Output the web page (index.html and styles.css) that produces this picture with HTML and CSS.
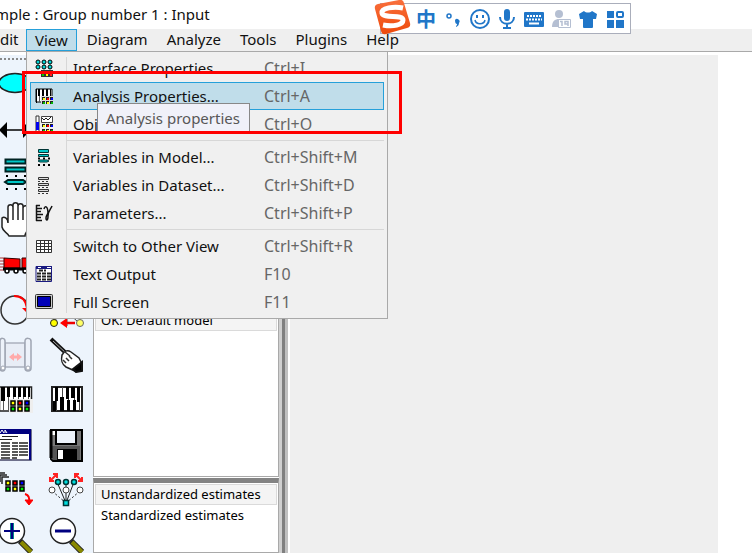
FILE: index.html
```html
<!DOCTYPE html>
<html lang="en">
<head>
  <meta charset="UTF-8">
  <title>Group number 1 : Input</title>
  <link rel="stylesheet" href="styles.css">
</head>
<body>

  <header class="titlebar">mple : Group number 1 : Input</header>

  <nav class="menubar">
    <button class="edit">dit</button>
    <div class="dropdown">
      <button class="open">View</button>
      <div class="menu">
        <button class="item">
          <svg viewBox="0 0 18 18">
            <g fill="#00d5d5" stroke="#000"><circle cx="3" cy="3" r="2"/><circle cx="9" cy="3" r="2"/><circle cx="15" cy="3" r="2"/><circle cx="3" cy="8" r="2"/><circle cx="9" cy="8" r="2"/><circle cx="15" cy="8" r="2"/></g>
            <path d="M6 11h12v7H6z" fill="#333"/>
            <path d="M7 12h2v2H7zM11 15h2v2h-2z" fill="#ff0"/><path d="M11 12h2v2h-2zM15 15h2v2h-2z" fill="#f22"/><path d="M15 12h2v2h-2z" fill="#22f"/><path d="M7 15h2v2H7z" fill="#0c0"/>
          </svg>
          <span>Interface Properties...</span><kbd>Ctrl+I</kbd>
        </button>
        <button class="item active">
          <svg viewBox="0 0 18 18">
            <path d="M1 2h16v13H1z" fill="#fff" stroke="#000"/>
            <path d="M4.500 2v13M8.500 2v7M12.500 2v7" stroke="#555"/>
            <path d="M3 2h2v7H3zM7 2h2v7H7zM11 2h2v7h-2zM15 2h1v7h-1zM1 2h1v14H1z"/>
            <path d="M6 9h12v8H6z" fill="#ddd"/>
            <path d="M7 10h3v3H7zM11 10h3v3h-3zM15 10h3v3h-3zM7 14h3v3H7zM11 14h3v3h-3zM15 14h3v3h-3z" fill="#222"/>
            <path d="M8 11h2v2H8zM12 15h2v2h-2z" fill="#ff0"/><path d="M12 11h2v2h-2z" fill="#f00"/><path d="M16 11h2v2h-2z" fill="#00f"/><path d="M8 15h2v2H8zM16 15h2v2h-2z" fill="#0b0"/>
          </svg>
          <span>Analysis Properties...</span><kbd>Ctrl+A</kbd>
        </button>
        <button class="item">
          <svg viewBox="0 0 18 18">
            <path d="M1 1h3v16H1z" fill="#fff" stroke="#333"/><path d="M1 7h3v8H1z" fill="#00e"/>
            <path d="M6.500 1.500h11v6h-11z" fill="#fff" stroke="#444"/><path d="M7 3l2 2 2-2 2 2 3-3" fill="none" stroke="#222"/>
            <path d="M7 9h3v3H7zM11 9h3v3h-3zM15 9h3v3h-3zM7 14h3v3H7zM11 14h3v3h-3zM15 14h3v3h-3z" fill="#222"/>
            <path d="M8 10h2v2H8zM12 15h2v2h-2z" fill="#ff0"/><path d="M12 10h2v2h-2z" fill="#f00"/><path d="M16 10h2v2h-2z" fill="#00f"/><path d="M8 15h2v2H8zM16 15h2v2h-2z" fill="#0b0"/>
          </svg>
          <span>Object Properties...</span><kbd>Ctrl+O</kbd>
        </button>
        <hr>
        <button class="item">
          <svg viewBox="0 0 18 18">
            <path d="M3.500 1.500h10v3h-10zM3.500 6.500h10v2h-10z" fill="#00c8c8" stroke="#033"/>
            <path d="M3 13l2-1h7l2 1-2 1H5z" fill="#00c8c8" stroke="#033"/>
            <path d="M3 10.500h12M3 17h12" stroke="#000" stroke-width="2" stroke-dasharray="2 3"/>
          </svg>
          <span>Variables in Model...</span><kbd>Ctrl+Shift+M</kbd>
        </button>
        <button class="item">
          <svg viewBox="0 0 18 18">
            <path d="M3.500 1.500h10v2h-10zM3.500 7.500h10v2h-10zM3.500 13.500h10v2h-10z" fill="#ddd" stroke="#333"/>
            <path d="M3 5.500h12M3 11.500h12M3 17.500h12" stroke="#333" stroke-width="1" stroke-dasharray="2 2"/>
          </svg>
          <span>Variables in Dataset...</span><kbd>Ctrl+Shift+D</kbd>
        </button>
        <button class="item">
          <svg viewBox="0 0 18 18" fill="none" stroke="#111">
            <path d="M1.500 1v16M1 1.500h4M1 4.500h6M1 7.500h5M1 10.500h7M1 13.500h5M1 16.500h6" stroke-width="1.500"/>
            <path d="M9 5c1-4 4-3 4 5M17 2c-1 3-4 5-4 10s-2 5-2 2 2-3 2-6" stroke-width="1.500"/>
          </svg>
          <span>Parameters...</span><kbd>Ctrl+Shift+P</kbd>
        </button>
        <hr>
        <button class="item">
          <svg viewBox="0 0 18 18">
            <path d="M1.500 3.500h15v12h-15zM5.500 3v13M9.500 3v13M13.500 3v13M1 6.500h16M1 9.500h16M1 12.500h16" fill="#fff" stroke="#333"/>
          </svg>
          <span>Switch to Other View</span><kbd>Ctrl+Shift+R</kbd>
        </button>
        <button class="item">
          <svg viewBox="0 0 18 18">
            <path d="M1 1.500h15.500v15H1z" fill="#fff" stroke="#1a1a80"/><path d="M1 1h16v3H1z" fill="#1a1a80"/><path d="M3 2h3v1H3zM12 2h4v1h-4z" fill="#fff"/>
            <path d="M4 5.500h7M2 8.500h14M2 11.500h14M2 14.500h14" stroke="#222" stroke-width="2" stroke-dasharray="4 1"/>
          </svg>
          <span>Text Output</span><kbd>F10</kbd>
        </button>
        <button class="item">
          <svg viewBox="0 0 18 18">
            <rect x=".500" y="1.500" width="17" height="14" rx="1" fill="#ccc" stroke="#333"/>
            <path d="M2.500 3.500h13v10h-13z" fill="#0000b8" stroke="#000"/>
          </svg>
          <span>Full Screen</span><kbd>F11</kbd>
        </button>
        <div class="tooltip" role="tooltip">Analysis properties</div>
      </div>
    </div>
    <button>Diagram</button>
    <button>Analyze</button>
    <button>Tools</button>
    <button>Plugins</button>
    <button>Help</button>
  </nav>

  <main class="workspace">
    <aside class="toolbox">
      <button class="tool left" aria-label="Draw observed variables">
        <svg viewBox="0 0 36 36"><ellipse cx="18" cy="16" rx="16" ry="9.500" fill="#0ff" stroke="#222" stroke-width="1.500"/></svg>
      </button>
      <button class="tool left" aria-label="Draw covariances">
        <svg viewBox="0 0 36 36"><path d="M4 18h28" stroke="#000" stroke-width="1.500"/><path d="M2 18l8-8v16zM34 18l-8-8v16z"/></svg>
      </button>
      <button class="tool left" aria-label="List variables in model">
        <svg viewBox="0 0 36 36">
          <path d="M8.500 2.500h20v4h-20zM8.500 10.500h20v4h-20zM8 25l3-2h15l3 2-3 2H11z" fill="#00c8c8" stroke="#022" stroke-width="2"/>
          <path d="M9 19h20M9 32h20" stroke="#000" stroke-width="2" stroke-dasharray="2 7"/>
        </svg>
      </button>
      <button class="tool left" aria-label="Select all objects">
        <svg viewBox="0 0 36 36"><path d="M12 34c-2-4-6-4-7-9V16c2-2 6 0 6 5V5c0-3 5-3 5 0V3c0-3 5-3 5 0v1c0-3 5-3 5 0v2c0-3 5-3 5 0v20c0 4-3 4-3 8zM16 5v13M21 4v14M26 5v13" fill="#fff" stroke="#222" stroke-width="1.500"/></svg>
      </button>
      <button class="tool left" aria-label="Move objects">
        <svg viewBox="0 0 36 36">
          <path d="M0 11h7M2 14h5M0 17h7M2 20h5M0 23h7" stroke="#a33"/>
          <path d="M7 11l16 1v9H7zM25 11h10v10H25z" fill="#f00" stroke="#300"/><path d="M6 22h29" stroke="#000" stroke-width="3"/>
          <g fill="#fff" stroke="#000" stroke-width="1.500"><circle cx="10" cy="24" r="2"/><circle cx="19" cy="24" r="2"/><circle cx="28" cy="24" r="2"/></g>
        </svg>
      </button>
      <button class="tool left" aria-label="Rotate indicators">
        <svg viewBox="0 0 36 36"><circle cx="18" cy="18" r="14" fill="none" stroke="#333" stroke-width="1.500"/><path d="M17 4c8 0 12 5 13 12" fill="none" stroke="#f00" stroke-width="2"/><path d="M25 16h9l-4 5z" fill="#f00"/></svg>
      </button>
      <button class="tool" aria-label="Move parameter values">
        <svg viewBox="0 0 36 36">
          <path d="M6 30L16 16M18 19L30 30M19 15v19" stroke="#444"/>
          <path d="M15 31h12" stroke="#e00" stroke-width="2.500"/><path d="M19 26v10l-7-5z" fill="#f00"/>
          <circle cx="6" cy="31" r="3.500" fill="#ff0" stroke="#222"/><circle cx="32" cy="31" r="3.500" fill="#ff6" stroke="#666"/>
        </svg>
      </button>
      <button class="tool left" aria-label="Scroll the path diagram">
        <svg viewBox="0 0 36 36">
          <path d="M8 6h20v24H8z" fill="#e8edf6" stroke="#aab0bd" stroke-width="1.500"/>
          <path d="M3 31V4c0-4 5-3 5 0v27c0 4-5 4-5 0zM28 31V4c0-4 6-3 6 0v27c0 4-6 4-6 0z" fill="#edf2fa" stroke="#9fa5b2" stroke-width="1.500"/>
          <circle cx="6" cy="31" r="2" fill="#fff" stroke="#9fa5b2"/><circle cx="31" cy="31" r="2" fill="#fff" stroke="#9fa5b2"/>
          <path d="M14 20h8" stroke="#faa" stroke-width="3"/><path d="M12 20l5-4v8zM25 20l-5-4v8z" fill="#faa"/>
        </svg>
      </button>
      <button class="tool" aria-label="Touch up a variable">
        <svg viewBox="0 0 36 36">
          <path d="M3 2l18 17" stroke="#111" stroke-width="4"/><path d="M5 4l14 13" stroke="#aaa"/>
          <path d="M14 18c3-5 6-5 9-3l8 6 3 6-7 7-9-4c-5-3-5-7-4-12z" fill="#fff" stroke="#222" stroke-width="1.500"/>
          <path d="M17 15l5 4M18 21l3 3M21 19l3 3M15 23l3 3" stroke="#333" stroke-width="1.500"/>
          <path d="M34 25l-9 7 3 3 6-1z" stroke="#111" stroke-width="2"/>
        </svg>
      </button>
      <button class="tool left" aria-label="Analysis properties">
        <svg viewBox="0 0 36 36">
          <path d="M2.500 5h32v24h-32z" fill="#fff" stroke="#222" stroke-width="1.500"/>
          <path d="M6.500 5v24M11.500 5v24M16.500 5v24M21.500 5v24M26.500 5v24M31.500 5v24" stroke="#555"/>
          <path d="M4 5h4v14H4zM10 5h3v10h-3zM16 5h3v10h-3zM21 5h3v10h-3zM26 5h3v10h-3zM31 5h2v10h-2z"/>
          <path d="M12 17h24v14H12z" fill="#eee"/>
          <g stroke="#000" stroke-width="1.500"><path d="M14 19h4v4h-4zM21 25h4v4h-4z" fill="#ff0"/><path d="M21 19h4v4h-4z" fill="#f00"/><path d="M28 19h4v4h-4z" fill="#00f"/><path d="M14 25h4v4h-4zM28 25h4v4h-4z" fill="#0e0"/></g>
        </svg>
      </button>
      <button class="tool" aria-label="Calculate estimates">
        <svg viewBox="0 0 36 36">
          <path d="M4 5h30v24H4z" fill="#fff" stroke="#222" stroke-width="2"/>
          <path d="M8.500 5v24M14.500 5v24M20.500 5v24M26.500 5v24M31.500 5v24" stroke="#444"/>
          <path d="M7 5h3v14H7zM12 15h4v14h-4zM18 5h3v12h-3zM23 5h4v11h-4zM29 5h3v15h-3zM5 19h3v10H5zM19 18h3v11h-3zM25 18h3v11h-3z"/>
        </svg>
      </button>
      <button class="tool left" aria-label="View text">
        <svg viewBox="0 0 36 36">
          <path d="M1 3h33v30H1z" fill="#fff" stroke="#446" stroke-width="1.500"/><path d="M1 2h33v5H1z" fill="#000080"/><path d="M3 6l2-3 2 3M8 6V3l2 3" fill="none" stroke="#fff"/>
          <path d="M5 9.500h16M3 12.500h12" stroke="#222"/>
          <path d="M4 16h29M4 19h29M4 22h29M4 25h29M4 28h29M4 31h16" stroke="#222" stroke-width="1.500" stroke-dasharray="9 2 6 1"/><path d="M33 7v26" stroke="#000080" stroke-width="2"/>
        </svg>
      </button>
      <button class="tool" aria-label="Save the path diagram">
        <svg viewBox="0 0 36 36">
          <path d="M3 3h31v31H5l-2-2z" fill="#777" stroke="#000" stroke-width="2"/><path d="M3 19h29v14H5l-2-2z" fill="#555"/>
          <path d="M7 3h22v15H7z" fill="#000"/><path d="M9 4h18v12H9z" fill="#edf3fb"/><path d="M4 4h3v4H4z" fill="#fff"/>
          <path d="M9 22h20v12H9z"/><path d="M10 23h5v9h-5z" fill="#fff"/><path d="M3 3v28" stroke="#000" stroke-width="3"/>
        </svg>
      </button>
      <button class="tool left" aria-label="Copy properties">
        <svg viewBox="0 0 36 36">
          <path d="M5 12V5h7M1 8V1h7M3 10V3h7" fill="none" stroke="#222" stroke-width="1.500"/>
          <g stroke="#000" stroke-width="1.500"><path d="M9 9h4v4H9zM16 15h4v4h-4z" fill="#ff0"/><path d="M16 9h4v4h-4z" fill="#f00"/><path d="M23 9h4v4h-4z" fill="#00f"/><path d="M9 15h4v4H9zM23 15h4v4h-4z" fill="#0e0"/></g>
          <path d="M28 22c4 1 5 4 4 9" fill="none" stroke="#f00" stroke-width="2"/><path d="M28 28l4 5 4-5z" fill="#f00" stroke="#f00"/>
        </svg>
      </button>
      <button class="tool" aria-label="Preserve symmetries">
        <svg viewBox="0 0 36 36">
          <path d="M18 31L9 10M18 31V10M18 31l8-21" stroke="#222"/><path d="M18 31L4 19M18 31l14-12" stroke="#222" stroke-dasharray="2 2"/>
          <g fill="#fff" stroke="#444"><circle cx="4" cy="18" r="3"/><circle cx="18" cy="18" r="3"/><circle cx="32" cy="18" r="3"/></g>
          <g fill="#0dd" stroke="#033" stroke-width="1.500"><circle cx="10" cy="10" r="2.500"/><circle cx="18" cy="10" r="2.500"/><circle cx="26" cy="10" r="2.500"/><path d="M15.500 28.500h5v5h-5z"/></g>
          <path d="M5 2h4v4M9 2L2 9M2 5v4h4M31 2h-4v4M27 2l7 7M34 5v4h-4" fill="none" stroke="#f22" stroke-width="2"/>
        </svg>
      </button>
      <button class="tool left" aria-label="Zoom in">
        <svg viewBox="0 0 36 36"><path d="M23 24l11 11" stroke="#222" stroke-width="6"/><path d="M24 25l10 10" stroke="#880" stroke-width="4"/><circle cx="15" cy="14" r="12.500" fill="#fff" stroke="#222" stroke-width="1.500"/><path d="M15 6v16" stroke="#088" stroke-width="4"/><path d="M15 6v16M7 14h16" stroke="#000080" stroke-width="2"/></svg>
      </button>
      <button class="tool" aria-label="Zoom out">
        <svg viewBox="0 0 36 36"><path d="M23 24l11 11" stroke="#222" stroke-width="6"/><path d="M24 25l10 10" stroke="#880" stroke-width="4"/><circle cx="15" cy="14" r="12.500" fill="#fff" stroke="#222" stroke-width="1.500"/><path d="M7 14h16" stroke="#000080" stroke-width="3"/></svg>
      </button>
    </aside>

    <section class="panels">
      <div class="panel"></div>
      <ul class="panel models">
        <li class="selected">OK: Default model</li>
      </ul>
      <ul class="panel estimates">
        <li class="selected">Unstandardized estimates</li>
        <li>Standardized estimates</li>
      </ul>
    </section>

    <div class="splitter"></div>
    <section class="canvas"></section>
  </main>

  <div class="highlight"></div>

  <div class="ime">
    <svg class="logo" viewBox="0 0 38 36">
      <defs><linearGradient id="orange" x2="0" y2="1"><stop offset="0" stop-color="#f96f3c"/><stop offset="1" stop-color="#ee4a0b"/></linearGradient></defs>
      <path d="M4 4L25 0q4-1 5 3l6 20q1 4-3 5L12 34q-4 1-5-3L1 9q-1-4 3-5z" fill="url(#orange)"/>
      <path d="M29 8C20 6 7 8 8 13c1 6 21 1 21 7 0 5-10 7-20 5" fill="none" stroke="#fff" stroke-width="5"/>
    </svg>
    <span class="lang">中</span>
    <svg viewBox="0 0 20 20"><circle cx="6" cy="7" r="2" fill="none" stroke="#2076c8" stroke-width="1.500"/><path d="M12 11a2.500 2.500 0 1 1 4 3c0 2-1 3-3 4v-1c1-1 1-1 1-2-1 0-2-1-2-4z"/></svg>
    <svg viewBox="0 0 20 20"><circle cx="10" cy="10" r="9" fill="none" stroke="#2076c8" stroke-width="2"/><path d="M6 6h2v3H6zM12 6h2v3h-2z"/><path d="M5 11c1 5 9 5 10 0" fill="none" stroke="#2076c8" stroke-width="1.500"/></svg>
    <svg viewBox="0 0 20 20"><rect x="7" y="0" width="6" height="12" rx="3"/><path d="M3 8c0 9 14 9 14 0M10 15v4M6 19h8" fill="none" stroke="#2076c8" stroke-width="2"/></svg>
    <svg viewBox="0 0 20 20"><rect y="3" width="20" height="15" rx="1"/><path d="M3 7h15M2 10.500h16" stroke="#fff" stroke-width="2" stroke-dasharray="2 1"/><path d="M5 14.500h10" stroke="#fff" stroke-width="2"/></svg>
    <svg viewBox="0 0 20 20" class="muted"><circle cx="8" cy="5" r="4"/><path d="M1 18c0-6 3-8 7-8h3v8z"/><path d="M7.500 10.500h12v8h-12z" fill="#fff" stroke="#b5bfd2"/><path d="M9 12.500h2V17M17 17v-4.500h-3V15h3" fill="none" stroke="#b5bfd2" stroke-width="1.500"/></svg>
    <svg viewBox="0 0 20 20"><path d="M6 2c2 2 6 2 8 0l5 3-1 5h-3v8q0 1-1 1H6q-1 0-1-1v-8H2L1 5z"/></svg>
    <svg viewBox="0 0 20 20"><path d="M2 2h7v7H2zM2 11h7v8H2zM11 11h8v8h-8z"/><rect x="12" y="3" width="6" height="5" rx="1" fill="none" stroke="#2076c8" stroke-width="2"/></svg>
  </div>

</body>
</html>
```

FILE: styles.css
```css
* {
  box-sizing: border-box;
}

body {
  margin: 0;
  height: 100vh;
  display: flex;
  flex-direction: column;
  overflow: hidden;
  background: #fff;
  color: #111;
  font-family: "Noto Sans", "Noto Sans CJK SC", sans-serif;
  font-size: 15px;
}

button {
  padding: 0;
  border: none;
  background: none;
  color: inherit;
  font: inherit;
}

.titlebar {
  height: 29px;
  margin-left: -5px;
  line-height: 28px;
  white-space: nowrap;
}

.menubar {
  display: flex;
  height: 23px;
  background: #efefef;
  border-bottom: 1px solid #a9a9a9;
}

.menubar > button,
.open {
  height: 22px;
  padding: 0 9px 2px 10px;
  line-height: 20px;
}

.menubar > .edit {
  width: 26px;
  padding-left: 0;
  text-align: right;
}

.dropdown {
  position: relative;
}

.open {
  border: 1px solid #26a0da;
  padding: 0 8px 1px;
  background: #c0ddea;
}

/* drop-down menu */
.menu {
  position: absolute;
  top: 22px;
  left: 0;
  z-index: 2;
  width: 362px;
  padding: 2px 3px;
  border: 1px solid #a9a9a9;
  background: linear-gradient(#d7d7d7, #d7d7d7) 39px 5px / 1px 256px no-repeat #f0f0f0;
}

.item {
  display: grid;
  grid-template-columns: 42px 191px 1fr;
  align-items: center;
  width: 100%;
  height: 28px;
  padding: 0 0 1px 1px;
  line-height: 20px;
  text-align: left;
}

.item svg {
  width: 18px;
  height: 18px;
  margin-left: 4px;
}

.item kbd {
  color: #666;
  font: inherit;
  font-size: 16px;
}

.item.active {
  padding-left: 0;
  border: 1px solid #26a0da;
  background: #c0ddea;
}

.menu hr {
  height: 1px;
  margin: 2px 0 2px 37px;
  border: none;
  background: #d7d7d7;
}

.tooltip {
  position: absolute;
  top: 51px;
  left: 70px;
  padding: 0 9px 0 8px;
  border: 1px solid #888;
  background: #f0f1f9;
  color: #575757;
  line-height: 29px;
  white-space: nowrap;
}

.workspace {
  flex: 1;
  display: flex;
  min-height: 0;
  padding-top: 3px;
}

.toolbox {
  display: grid;
  grid-template-columns: 51px 51px;
  grid-auto-rows: 45px;
  flex: none;
  width: 93px;
  padding-top: 6px;
  background: linear-gradient(90deg, #888 50%, transparent 50%) 0 3px / 4px 2px repeat-x #edf4fc;
}

.tool {
  grid-column: 2;
  width: 36px;
  height: 36px;
  margin: 6px 0 0 -3px;
}

.tool.left {
  grid-column: 1;
}

.tool svg {
  display: block;
  width: 36px;
  height: 36px;
}

.panels {
  display: grid;
  grid-template-rows: 252px 169px 1fr;
  gap: 1px;
  flex: none;
  width: 186px;
  font-size: 13px;
}

.panel {
  margin: 0;
  padding: 1px;
  border: 1px solid #a9a9a9;
  background: #fff;
  color: #000;
  list-style: none;
}

.panel li {
  height: 21px;
  padding: 0 5px;
  border: 1px solid transparent;
  line-height: 19px;
}

.panel .selected {
  border-color: #dadada;
  background: #f4f4f4;
}

.estimates {
  border-top: 5px solid #838383;
}

.splitter {
  flex: none;
  width: 11px;
  background: linear-gradient(90deg, #d0d0d0 3px, #808080 3px 6px, #c0c0c0 6px 9px, #fff 9px);
}

.canvas {
  flex: 1;
  margin-right: 34px;
  background: #efefef;
}

/* red frame around the menu entry */
.highlight {
  position: absolute;
  top: 71px;
  left: 22px;
  z-index: 3;
  width: 380px;
  height: 63px;
  border: 3px solid #f00;
}

/* input method bar */
.ime {
  position: absolute;
  top: 3px;
  left: 380px;
  z-index: 4;
  display: flex;
  align-items: center;
  gap: 7px;
  width: 251px;
  height: 31px;
  padding-left: 35px;
  border: 1px solid #aaaebb;
  background: #fff;
}

.ime svg {
  flex: none;
  width: 20px;
  height: 20px;
  fill: #2076c8;
}

.ime .muted {
  fill: #b5bfd2;
}

.ime .logo {
  position: absolute;
  top: -4px;
  left: -7px;
  width: 38px;
  height: 36px;
}

.lang {
  width: 20px;
  color: #2076c8;
  font-family: "Noto Sans CJK SC", sans-serif;
  font-size: 20px;
  font-weight: bold;
  line-height: 28px;
}
```
